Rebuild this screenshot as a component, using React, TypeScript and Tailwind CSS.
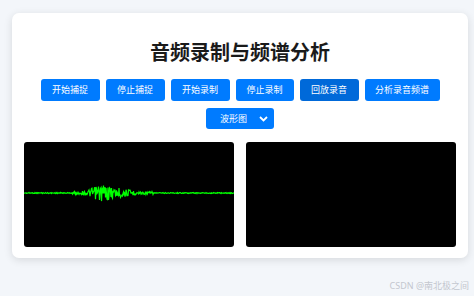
import React from "react";

const buttons = [
  { label: "开始捕捉", w: "w-[59px]" },
  { label: "停止捕捉", w: "w-[59px]" },
  { label: "开始录制", w: "w-[59px]" },
  { label: "停止录制", w: "w-[58px]" },
  { label: "回放录音", w: "w-[59px]", active: true },
  { label: "分析录音频谱", w: "w-[75px]" },
];

// deterministic noise for the waveform
function rand(i: number) {
  const x = Math.sin(i * 12.9898 + 78.233) * 43758.5453;
  return x - Math.floor(x);
}

function wavePoints() {
  const pts: string[] = [];
  const mid = 51;
  for (let i = 0; i <= 420; i++) {
    const x = i / 2;
    let amp = 0.5;
    if (x > 48 && x < 130) {
      const d = (x - 78) / 12;
      amp += 7 * Math.exp(-d * d);
      const d2 = (x - 98) / 10;
      amp += 3 * Math.exp(-d2 * d2);
      amp += 1;
    }
    const y = mid + (rand(i) - 0.5) * 2 * amp;
    pts.push(`${x.toFixed(1)},${y.toFixed(1)}`);
  }
  return pts.join(" ");
}

export default function App() {
  const points = wavePoints();
  return (
    <div
      className="min-h-[296px] bg-[#f3f6fa] pt-[13px] pl-[12px] pr-[6px] relative"
      style={{ fontFamily: '"Noto Sans", "Noto Sans CJK SC", sans-serif' }}
    >
      <div className="bg-white rounded-[7px] shadow-[0_2px_8px_rgba(0,0,0,0.12)] px-[12px] pt-[26px] pb-[11px]">
        <h1 className="text-center text-[20px] leading-[28px] font-bold text-[#1a1a1a]">
          音频录制与频谱分析
        </h1>

        <div className="mt-[12px] flex flex-wrap justify-center gap-x-[6px] gap-y-[7px]">
          {buttons.map((b) => (
            <button
              key={b.label}
              className={`${b.w} h-[22px] rounded-[3px] text-white text-[9px] ${
                b.active ? "bg-[#0069d9]" : "bg-[#007bff]"
              }`}
            >
              {b.label}
            </button>
          ))}
          <div className="w-[68px] h-[21px] rounded-[3px] bg-[#007bff] text-white text-[9px] flex items-center pl-[14px] pr-[6px]">
            <span className="flex-1">波形图</span>
            <svg width="9" height="6" viewBox="0 0 9 6" fill="none">
              <path d="M1 1l3.5 3.5L8 1" stroke="white" strokeWidth="1.8" />
            </svg>
          </div>
        </div>

        <div className="mt-[13px] flex gap-[12px]">
          <div className="w-[210px] h-[105px] bg-black rounded-[3px] overflow-hidden">
            <svg width="210" height="105" viewBox="0 0 210 105">
              <polyline points={points} fill="none" stroke="#00ff00" strokeWidth="1.2" />
            </svg>
          </div>
          <div className="w-[210px] h-[105px] bg-black rounded-[3px]" />
        </div>
      </div>

      <div className="absolute right-[5px] bottom-[4px] text-[9px] text-[#c3c7cf]">
        CSDN @南北极之间
      </div>
    </div>
  );
}
